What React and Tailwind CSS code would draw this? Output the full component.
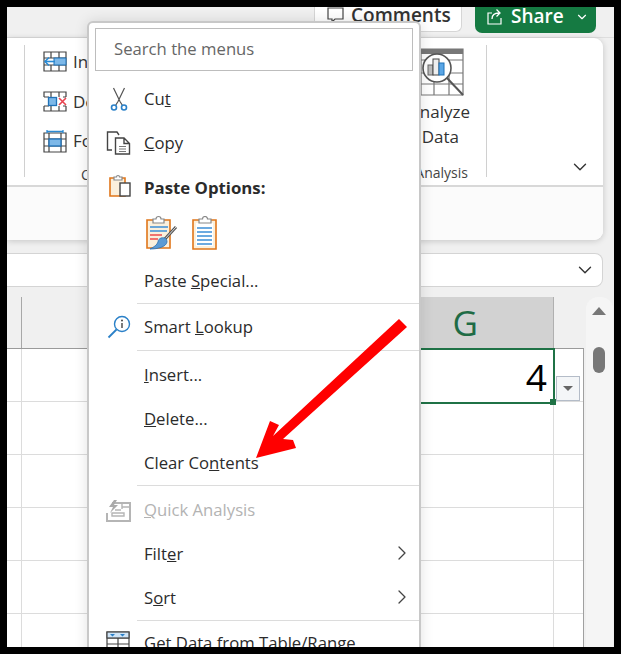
import { ChevronDown, ChevronRight } from 'lucide-react';

const font = { fontFamily: '"Open Sans", "Noto Sans", sans-serif' };

function InsertIcon() {
  return (
    <svg width="24" height="21" viewBox="0 0 24 21" fill="none">
      <path d="M1 1h22v19H1z M1 7h22 M1 14h22 M8 1v6 M8 14v6 M16 1v19" stroke="#444" strokeWidth="1.2" />
      <rect x="11" y="7" width="12" height="7" fill="#7db8e8" stroke="#1f72b8" />
      <path d="M12 10.500H2" stroke="#2a8ad4" strokeWidth="1.6" />
      <path d="M6 6.500l-4 4 4 4" stroke="#2a8ad4" strokeWidth="1.6" />
    </svg>
  );
}

function DeleteIcon() {
  return (
    <svg width="24" height="21" viewBox="0 0 24 21" fill="none">
      <path d="M1 6V1h22v5 M1 15v5h22v-5 M8 1v5 M16 1v5 M8 15v5 M16 15v5 M1 6h5 M1 15h5 M20 6h3 M20 15h3" stroke="#444" strokeWidth="1.2" />
      <rect x="5.500" y="6.500" width="8" height="8" fill="#7db8e8" stroke="#1f72b8" strokeWidth="1.3" />
      <path d="M16 7l7 7 M23 7l-7 7" stroke="#e8434f" strokeWidth="1.6" />
    </svg>
  );
}

function FormatIcon() {
  return (
    <svg width="24" height="24" viewBox="0 0 24 24" fill="none">
      <path d="M1 4h22v19H1z M1 10h22 M1 17h22 M6 4v19 M18 4v19" stroke="#444" strokeWidth="1.2" />
      <rect x="6" y="10" width="12" height="7" fill="#7db8e8" stroke="#1f72b8" strokeWidth="1.3" />
      <path d="M4 1v3 M20 1v3 M4 2.500h16" stroke="#2a8ad4" strokeWidth="1.3" />
    </svg>
  );
}

function CutIcon() {
  return (
    <svg width="18" height="24" viewBox="0 0 18 24" fill="none">
      <path d="M3.500 1l6.500 13.500 M14.500 1L8 14.500 M10 14.500l2.500 4 M8 14.500l-2.500 4" stroke="#555" strokeWidth="1.2" />
      <circle cx="4" cy="20.500" r="2.500" stroke="#2a80c8" strokeWidth="1.6" />
      <circle cx="14" cy="20.500" r="2.500" stroke="#2a80c8" strokeWidth="1.6" />
    </svg>
  );
}

function CopyIcon() {
  return (
    <svg width="25" height="24" viewBox="0 0 25 24" fill="none">
      <path d="M6 19H1.500V1H11l2 3" stroke="#444" strokeWidth="1.4" />
      <path d="M9.500 7H18l5.500 5.500V23H9.500z M18 7v5.500h5.500" stroke="#444" strokeWidth="1.4" fill="#fff" />
      <path d="M13 15.500h7 M13 18h7 M13 20.500h7" stroke="#777" strokeWidth="1" />
    </svg>
  );
}

function PasteIcon() {
  return (
    <svg width="22" height="23" viewBox="0 0 22 23" fill="none">
      <path d="M1 4h15v18H1z" fill="#fbf0dc" stroke="#e0761a" strokeWidth="1.6" />
      <path d="M5 6V3h2.500a1.500 1.500 0 013 0H13v3z" fill="#fff" stroke="#888" strokeWidth="1.2" />
      <rect x="11" y="9" width="10" height="13" fill="#fff" stroke="#444" strokeWidth="1.4" />
    </svg>
  );
}

function PasteFormatIcon() {
  return (
    <svg width="32" height="36" viewBox="0 0 32 36" fill="none">
      <path d="M1 5h23v28H1z" fill="#fbf0dc" stroke="#e0761a" strokeWidth="1.6" />
      <path d="M7 8V4h3a2.500 2.500 0 015 0h3v4z" fill="#fff" stroke="#888" strokeWidth="1.2" />
      <path d="M4 12h18 M4 16h17" stroke="#3d8fd6" strokeWidth="1.3" />
      <path d="M4 20h12 M4 24h8" stroke="#ee4b4b" strokeWidth="1.3" />
      <path d="M30 12L18 25" stroke="#555" strokeWidth="3" />
      <path d="M30 12L18 25" stroke="#ddd" strokeWidth="1" />
      <path d="M15 23c4-1 6 1 6 4-1 5-9 7-17 7 4-2 7-4 8-7 0-2 1-3 3-4z" fill="#5b9bd5" stroke="#2a6fb0" strokeWidth="0.8" />
    </svg>
  );
}

function PasteValuesIcon() {
  return (
    <svg width="26" height="34" viewBox="0 0 26 34" fill="none">
      <path d="M1 4h23v29H1z" fill="#fbf0dc" stroke="#e0761a" strokeWidth="1.6" />
      <rect x="4" y="7" width="17" height="23" fill="#fff" />
      <path d="M7 7V3h3.500a2.500 2.500 0 015 0H19v4z" fill="#fff" stroke="#888" strokeWidth="1.2" />
      <path d="M5 12h15 M5 16h15 M5 20h15 M5 24h15 M5 28h15" stroke="#3d8fd6" strokeWidth="1.3" />
    </svg>
  );
}

function LookupIcon() {
  return (
    <svg width="24" height="24" viewBox="0 0 24 24" fill="none">
      <circle cx="15" cy="9" r="7.500" stroke="#2a80c8" strokeWidth="1.4" fill="#fff" />
      <path d="M9.500 14.500L1.500 22.500" stroke="#2a80c8" strokeWidth="1.8" />
      <path d="M15 8v5" stroke="#444" strokeWidth="1.4" />
      <circle cx="15" cy="5.500" r="1" fill="#444" />
    </svg>
  );
}

function QuickIcon() {
  return (
    <svg width="25" height="23" viewBox="0 0 25 23" fill="none">
      <path d="M6 4H24V22H1V14" stroke="#b5b5b5" strokeWidth="2" />
      <path d="M8 1L3 8h4l-3 6 8-8H8l3-5z" fill="#aaa" />
      <path d="M9 11h6 M6 17V14h12v3z M16 4v6 M16 8h8" stroke="#b5b5b5" strokeWidth="1.4" />
    </svg>
  );
}

function TableIcon() {
  return (
    <svg width="24" height="24" viewBox="0 0 24 24" fill="none">
      <path d="M1 1h22v22H1z M1 7h22 M1 13h22 M1 19h22 M12 7v16" stroke="#444" strokeWidth="1.2" />
      <rect x="1" y="1" width="22" height="6" fill="#cfe4f6" stroke="#444" strokeWidth="1.2" />
      <path d="M4 3h5l-2.500 2.500z M14 3h5l-2.500 2.500z" fill="#2a80c8" />
    </svg>
  );
}

function AnalyzeIcon() {
  return (
    <svg width="44" height="48" viewBox="0 0 44 48" fill="none">
      <path d="M1 1h42v46H1z M1 12h42 M1 25h42 M1 36h42 M14 12v35 M29 12v35" stroke="#777" strokeWidth="1.2" />
      <rect x="1" y="1" width="42" height="5" fill="#777" />
      <circle cx="17" cy="20" r="14" fill="#fff" stroke="#555" strokeWidth="1.6" />
      <path d="M27 30L43 47" stroke="#555" strokeWidth="2" />
      <rect x="8" y="17" width="5" height="10" fill="#bbb" stroke="#666" />
      <rect x="13" y="11" width="6" height="16" fill="#eee" stroke="#444" />
      <rect x="19" y="15" width="5" height="12" fill="#5aa6e6" stroke="#1f72b8" />
    </svg>
  );
}

function ShareIcon() {
  return (
    <svg width="17" height="17" viewBox="0 0 17 17" fill="none">
      <path d="M14 10v6H1V5h4" stroke="#fff" strokeWidth="1.2" />
      <path d="M5 11c0-4 3-6 7-6 M9.500 1.500L13 5l-3.500 3.500" stroke="#fff" strokeWidth="1.3" />
    </svg>
  );
}

function RibbonRow({ icon, label }) {
  return (
    <div className="flex h-[39.5px] items-center gap-[6px] text-[17px] text-[#333]">
      {icon}
      <span>{label}</span>
    </div>
  );
}

function MenuRow({ icon, h = 'h-[44px]', disabled, arrow, children }) {
  return (
    <div className={`flex shrink-0 items-center text-[16.700px] ${h} ${disabled ? 'text-[#b3b3b3]' : 'text-[#2b2b2b]'}`}>
      <div className="flex w-[55px] shrink-0 items-center">{icon}</div>
      <span className="flex-1">{children}</span>
      {arrow && <ChevronRight size={24} strokeWidth={1.3} className="mb-[2px] mr-[5px] text-[#444]" />}
    </div>
  );
}

function Separator() {
  return <div className="ml-[48px] h-px shrink-0 bg-[#dcdcdc]" />;
}

function ContextMenu() {
  return (
    <div className="absolute left-[80px] top-[14px] flex w-[334px] flex-col rounded-tl-[6px] rounded-tr-[6px] border-2 border-[#c8c8c8] bg-white pt-[5px] shadow-[0_0_14px_rgba(0,0,0,0.12)]">
      <div className="mx-[6px] flex h-[43px] shrink-0 items-center border border-[#bdbdbd] pb-[2px] pl-[18px] text-[16.700px] text-[#666]">
        Search the menus
      </div>
      <div className="h-[6px] shrink-0" />
      <MenuRow icon={<span className="ml-[21px] flex"><CutIcon /></span>}>Cu<u>t</u></MenuRow>
      <MenuRow icon={<span className="ml-[17px] flex"><CopyIcon /></span>}><u>C</u>opy</MenuRow>
      <MenuRow h="h-[45px]" icon={<span className="ml-[20px] mb-[4px] flex"><PasteIcon /></span>}>
        <b className="text-[16.800px] font-bold">Paste Options:</b>
      </MenuRow>
      <div className="flex h-[46px] shrink-0 items-center gap-[14px] pl-[57px]">
        <PasteFormatIcon />
        <PasteValuesIcon />
      </div>
      <div className="h-[3px] shrink-0" />
      <MenuRow>Paste <u>S</u>pecial...</MenuRow>
      <Separator />
      <MenuRow h="h-[46px]" icon={<span className="ml-[18px] flex"><LookupIcon /></span>}>Smart <u>L</u>ookup</MenuRow>
      <Separator />
      <div className="h-[2px] shrink-0" />
      <MenuRow><u>I</u>nsert...</MenuRow>
      <MenuRow><u>D</u>elete...</MenuRow>
      <MenuRow>Clear Co<u>n</u>tents</MenuRow>
      <Separator />
      <div className="h-[2px] shrink-0" />
      <MenuRow disabled icon={<span className="ml-[17px] flex"><QuickIcon /></span>}><u>Q</u>uick Analysis</MenuRow>
      <MenuRow arrow>Filt<u>e</u>r</MenuRow>
      <MenuRow arrow>S<u>o</u>rt</MenuRow>
      <Separator />
      <MenuRow icon={<span className="ml-[17px] flex"><TableIcon /></span>}>Get Data from Table/Range...</MenuRow>
    </div>
  );
}

function GridRow() {
  return (
    <div className="flex h-[53px] shrink-0 border-b border-[#dcdcdc] bg-white">
      <div className="w-[15px] shrink-0 border-r border-[#dcdcdc]" />
      <div className="flex-1 border-r border-[#dcdcdc]" />
      <div className="w-[30px] shrink-0" />
    </div>
  );
}

export default function App() {
  return (
    <div className="h-[654px] w-[621px] overflow-hidden bg-black p-[7px]" style={font}>
      <div className="relative flex h-[640px] w-[607px] flex-col overflow-hidden bg-[#f0f0f0]">
        {/* top bar */}
        <div className="flex h-[31px] shrink-0 items-start justify-end border-b border-[#dedede] pr-[18px]">
          <div className="mr-[13px] flex h-[25px] w-[148px] items-center gap-[7px] rounded-b-[6px] border border-t-0 border-[#d6d6d6] bg-white pb-[7px] pl-[12px] text-[19px] font-semibold leading-none text-[#333]">
            <svg width="17" height="17" viewBox="0 0 17 17" fill="none"><path d="M1 1v11h4v3l3-3h8V1z" stroke="#444" strokeWidth="1.2" /></svg>
            Comments
          </div>
          <div className="flex h-[26px] w-[121px] items-center rounded-b-[7px] bg-[#157a42] pb-[7px] pl-[12px] text-[19px] font-semibold leading-none text-white">
            <ShareIcon />
            <span className="ml-[7px]">Share</span>
            <ChevronDown size={14} strokeWidth={2} className="ml-[11px]" />
          </div>
        </div>

        {/* ribbon */}
        <div className="mr-[11px] flex h-[202px] shrink-0 flex-col rounded-r-[9px] bg-white shadow-[0_1px_6px_rgba(0,0,0,0.18)]">
          <div className="flex h-[149px] shrink-0 border-b-2 border-[#d8d8d8]">
            <div className="mt-[7px] mb-[8px] ml-[17px] w-px bg-[#d0d0d0]" />
            <div className="ml-[18px] flex w-[354px] flex-col pt-[4px]">
              <RibbonRow icon={<InsertIcon />} label="Insert" />
              <RibbonRow icon={<DeleteIcon />} label="Delete" />
              <RibbonRow icon={<FormatIcon />} label="Format" />
              <div className="pl-[38px] pt-[3px] text-[14px] text-[#444]">Cells</div>
            </div>
            <div className="flex w-[89px] flex-col pt-[10px] text-[17px] leading-[25px] text-[#333]">
              <span className="ml-[23px] flex"><AnalyzeIcon /></span>
              <span className="mt-[3px] pr-[16px] text-right">Analyze</span>
              <span className="pr-[27px] text-right">Data</span>
              <span className="mt-[17px] pr-[18px] text-right text-[14px] leading-none text-[#444]">Analysis</span>
            </div>
            <div className="mt-[7px] mb-[8px] w-px bg-[#d0d0d0]" />
            <div className="flex flex-1 items-end justify-end pb-[7px] pr-[12px]">
              <ChevronDown size={22} strokeWidth={1.5} className="text-[#333]" />
            </div>
          </div>
          <div className="flex-1 rounded-br-[9px] bg-[#fbfbfb]" />
        </div>

        {/* formula bar */}
        <div className="mr-[11px] mt-[13px] flex h-[34px] shrink-0 items-center justify-end rounded-r-[8px] border border-l-0 border-[#d4d4d4] bg-white pr-[6px]">
          <ChevronDown size={22} strokeWidth={1.5} className="text-[#333]" />
        </div>

        {/* sheet */}
        <div className="flex min-h-0 flex-1">
          <div className="relative w-[577px] shrink-0">
            <div className="flex h-[62px] border-b border-[#9a9a9a] pt-[10px]">
              <div className="w-[15px] shrink-0 border-r border-[#a8a8a8]" />
              <div className="flex-1" />
              <div className="flex w-[134px] shrink-0 items-center justify-end border-r border-[#b0b0b0] bg-[#d2d2d2] pr-[75px] text-[35px] leading-none text-[#1f6b45]">
                G
              </div>
              <div className="w-[30px] shrink-0 bg-[#f0f0f0]" />
            </div>
            <GridRow />
            <GridRow />
            <GridRow />
            <GridRow />
            <GridRow />
            <GridRow />
            <div className="absolute right-0 top-[62px] h-full w-px bg-[#a0a0a0]" />
            {/* selected cell */}
            <div className="absolute left-[300px] right-[29px] top-[61px] flex h-[56px] items-center justify-end border-2 border-[#1f7246] bg-white pr-[6px] text-[37px] leading-none text-black">
              4
            </div>
            <div className="absolute left-[543px] top-[112px] h-[6px] w-[6px] bg-[#1f7246]" />
            <div className="absolute left-[549px] top-[89px] flex h-[25px] w-[24px] items-center justify-center border border-[#b4bcc8] bg-[#f4f6f8]">
              <div className="h-0 w-0 border-x-[5px] border-t-[5px] border-x-transparent border-t-[#666]" />
            </div>
          </div>
          <div className="ml-[2px] mr-[1px] mt-[10px] flex flex-1 flex-col items-center rounded-t-[12px] bg-[#f5f5f5] pr-[1px] pt-[10px]">
            <div className="h-0 w-0 border-x-[7px] border-b-[8px] border-x-transparent border-b-[#777]" />
            <div className="mt-[32px] h-[26px] w-[12px] rounded-full bg-[#777]" />
          </div>
        </div>

        <ContextMenu />

        <svg className="absolute left-0 top-0" width="607" height="640" viewBox="7 7 607 640">
          <polygon points="256,458 270,421 279,425 273,436 399,319 407,327 283,439 293,440 296,448" fill="#ff0000" />
        </svg>
      </div>
    </div>
  );
}
